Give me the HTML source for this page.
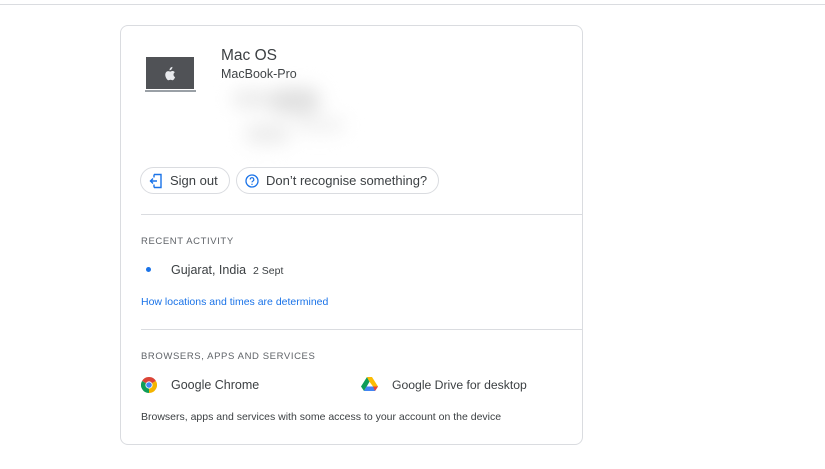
<!DOCTYPE html>
<html><head><meta charset="utf-8"><style>
*{margin:0;padding:0;box-sizing:border-box}
body{width:825px;height:469px;background:#fff;font-family:"Liberation Sans",Arial,sans-serif;color:#3c4043;position:relative;overflow:hidden}
.a{position:absolute;white-space:nowrap}
.topline{position:absolute;left:0;top:4px;width:825px;height:1px;background:#dadce0}
.card{position:absolute;left:120px;top:25px;width:463px;height:420px;border:1px solid #dadce0;border-radius:8px}
.div{position:absolute;left:141px;width:441px;height:1px;background:#dadce0}
.btn{position:absolute;top:167px;height:27px;border:1px solid #dadce0;border-radius:14px;font-size:13px;color:#3c4043;display:flex;align-items:center}
.cap{font-size:9.5px;letter-spacing:.6px;color:#5f6368}
</style></head><body>
<div class="topline"></div>
<div class="card"></div>
<svg class="a" style="left:145px;top:57px" width="52" height="36" viewBox="0 0 52 36">
<rect x="1" y="0" width="48" height="32" fill="#505256"/>
<rect x="0" y="33" width="51" height="2" fill="#9aa0a6"/>
<path d="M26.6 12.2c.6-.7.9-1.5.8-2.3-.8 0-1.6.5-2.1 1.1-.5.5-.9 1.4-.8 2.2.8.1 1.6-.4 2.1-1zM28.5 17.5c0-1.5 1.2-2.2 1.3-2.3-.7-1-1.8-1.2-2.2-1.2-.9-.1-1.8.6-2.3.6s-1.2-.5-2-.5c-1 0-2 .6-2.5 1.5-1.1 1.9-.3 4.6.8 6.1.5.7 1.1 1.6 1.9 1.5.8 0 1-.5 2-.5s1.2.5 2 .5c.8 0 1.3-.8 1.8-1.5.6-.8.8-1.6.8-1.6s-1.6-.6-1.6-2.6z" fill="#e8eaed"/>
</svg>
<div class="a" style="left:221px;top:47px;font-size:15.5px;color:#3c4043">Mac OS</div>
<div class="a" style="left:221px;top:67px;font-size:12.5px;color:#3c4043">MacBook-Pro</div>
<div class="a" style="left:220px;top:82px;width:140px;height:80px;filter:blur(9px)">
<div class="a" style="left:12px;top:8px;width:40px;height:18px;background:#ebebeb;border-radius:9px"></div>
<div class="a" style="left:50px;top:6px;width:50px;height:26px;background:#e0e0e0;border-radius:12px"></div>
<div class="a" style="left:25px;top:42px;width:45px;height:20px;background:#ececec;border-radius:10px"></div>
<div class="a" style="left:75px;top:35px;width:50px;height:16px;background:#f2f2f2;border-radius:8px"></div>
</div>
<div class="btn" style="left:140px;width:90px">
<svg style="margin-left:8px" width="14" height="16" viewBox="0 0 14 16"><path d="M5 1.5h7v13H5M5 1.5v3M5 11.5v3M1 8h7M4 5.5L1.5 8 4 10.5" fill="none" stroke="#1a73e8" stroke-width="1.4"/></svg>
<span style="margin-left:7px">Sign out</span></div>
<div class="btn" style="left:236px;width:203px">
<svg style="margin-left:8px" width="14" height="14" viewBox="0 0 14 14"><circle cx="7" cy="7" r="6" fill="none" stroke="#1a73e8" stroke-width="1.3"/><path d="M5.2 5.5a1.8 1.8 0 1 1 2.6 1.6c-.6.3-.8.7-.8 1.3" fill="none" stroke="#1a73e8" stroke-width="1.2"/><circle cx="7" cy="10.3" r=".7" fill="#1a73e8"/></svg>
<span style="margin-left:7px">Don’t recognise something?</span></div>
<div class="div" style="top:214px"></div>
<div class="a cap" style="left:141px;top:236px">RECENT ACTIVITY</div>
<div class="a" style="left:146px;top:267px;width:5px;height:5px;border-radius:50%;background:#1a73e8"></div>
<div class="a" style="left:171px;top:263px;font-size:12.5px">Gujarat, India</div>
<div class="a" style="left:253px;top:265px;font-size:10.5px">2 Sept</div>
<div class="a" style="left:141px;top:296px;font-size:10.5px;color:#1a73e8">How locations and times are determined</div>
<div class="div" style="top:329px"></div>
<div class="a cap" style="left:141px;top:351px">BROWSERS, APPS AND SERVICES</div>
<svg class="a" style="left:141px;top:377px" width="16" height="16" viewBox="0 0 16 16">
<path d="M8 8L1.07 4A8 8 0 0 1 14.93 4z" fill="#db4437"/>
<path d="M8 8L14.93 4A8 8 0 0 1 8 16z" fill="#f4b400"/>
<path d="M8 8L8 16A8 8 0 0 1 1.07 4z" fill="#0f9d58"/>
<circle cx="8" cy="8" r="3.6" fill="#fff"/><circle cx="8" cy="8" r="2.8" fill="#4285f4"/></svg>
<div class="a" style="left:171px;top:378px;font-size:12.5px">Google Chrome</div>
<svg class="a" style="left:361px;top:377px" width="17" height="15" viewBox="0 0 17 15">
<path d="M6 0L0 9.5 3 14 8.5 4.7z" fill="#0f9d58"/>
<path d="M11 0H6l2.5 4.7 3.5 4.8h5z" fill="#fbbc04"/>
<path d="M5.5 9.5L3 14h11l3-4.5z" fill="#4285f4"/>
<path d="M14 14l3-4.5h-5z" fill="#ea4335"/></svg>
<div class="a" style="left:392px;top:378px;font-size:12.2px">Google Drive for desktop</div>
<div class="a" style="left:141px;top:411px;font-size:10.5px">Browsers, apps and services with some access to your account on the device</div>
</body></html>
